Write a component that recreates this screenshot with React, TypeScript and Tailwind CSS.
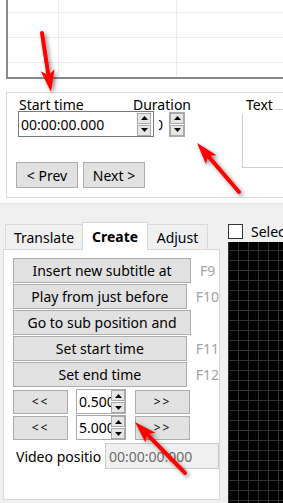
import React from 'react';

const Tri = ({ up }: { up?: boolean }) => (
  <svg width="7" height="4" viewBox="0 0 7 4">
    <polygon points={up ? '0,4 7,4 3.5,0' : '0,0 7,0 3.5,4'} fill="#000" />
  </svg>
);

const Spinner = () => (
  <div className="flex flex-col w-[14px] gap-[1px]">
    <div className="h-[11px] bg-[#e6e6e6] border border-[#a9a9a9] flex items-center justify-center">
      <Tri up />
    </div>
    <div className="h-[11px] bg-[#e6e6e6] border border-[#a9a9a9] flex items-center justify-center">
      <Tri />
    </div>
  </div>
);

const Arrow = ({ x1, y1, x2, y2 }: { x1: number; y1: number; x2: number; y2: number }) => {
  const dx = x2 - x1;
  const dy = y2 - y1;
  const len = Math.sqrt(dx * dx + dy * dy);
  const ux = dx / len;
  const uy = dy / len;
  const head = 22;
  const half = 7;
  const bx = x2 - ux * head;
  const by = y2 - uy * head;
  const pts = `${x2},${y2} ${bx - uy * half},${by + ux * half} ${bx + ux * 5},${by + uy * 5} ${bx + uy * half},${by - ux * half}`;
  return (
    <g filter="url(#shadow)">
      <line x1={x1} y1={y1} x2={bx + ux * 6} y2={by + uy * 6} stroke="#ff0000" strokeWidth="4" strokeLinecap="round" />
      <polygon points={pts} fill="#ff0000" />
    </g>
  );
};

const Btn = ({ children, className }: { children: React.ReactNode; className?: string }) => (
  <div className={`bg-[#e1e1e1] border border-[#adadad] flex items-center justify-center whitespace-nowrap ${className ?? ''}`}>
    {children}
  </div>
);

const shortcuts = [
  { label: 'Insert new subtitle at', key: 'F9' },
  { label: 'Play from just before', key: 'F10' },
  { label: 'Go to sub position and', key: '' },
  { label: 'Set start time', key: 'F11' },
  { label: 'Set end time', key: 'F12' },
];

export default function App() {
  return (
    <div className="w-[283px] h-[503px] overflow-hidden relative bg-white flex flex-col font-['Noto_Sans',sans-serif] text-[14px] text-black leading-[19px]">
      {/* subtitle list */}
      <div className="ml-[6px] h-[79px] shrink-0 border-l-2 border-b-2 border-[#868b90] flex flex-col overflow-hidden">
        {[13, 25, 25, 14].map((h, i) => (
          <div key={i} className={`flex ${i < 3 ? 'border-b border-[#ececec]' : ''}`} style={{ height: h }}>
            <div className="w-[51px] shrink-0 border-r border-[#ececec]" />
            <div className="w-[118px] shrink-0 border-r border-[#ececec]" />
            <div className="flex-1" />
          </div>
        ))}
      </div>

      {/* edit group */}
      <div className="mt-[13px] ml-[6px] h-[106px] shrink-0 border-l border-t border-b border-[#dcdcdc] flex">
        <div className="w-[235px] shrink-0 pl-[11px] pt-[2px]">
          <div className="h-[16px] overflow-hidden flex whitespace-nowrap">
            <span className="w-[115px] pl-[1px] shrink-0">Start time</span>
            <span>Duration</span>
          </div>
          <div className="h-[26px] flex">
            <div className="w-[136px] h-[26px] border border-[#7a7a7a] flex items-center justify-between pl-[2px] pr-[2px]">
              <span>00:00:00.000</span>
              <Spinner />
            </div>
            <div className="w-[5px]" />
            <div className="w-[10px] h-[26px] overflow-hidden flex items-center justify-end pr-[6px]">
              <span>0</span>
            </div>
            <div className="h-[26px] flex items-center">
              <div className="border border-[#a9a9a9] p-0">
                <Spinner />
              </div>
            </div>
          </div>
          <div className="mt-[25px] ml-[-2px] flex gap-[5px]">
            <Btn className="w-[62px] h-[26px]">&lt; Prev</Btn>
            <Btn className="w-[62px] h-[26px]">Next &gt;</Btn>
          </div>
        </div>
        <div className="flex-1 pt-[2px]">
          <div className="h-[16px] flex items-end">
            <span className="pl-[4px] leading-[19px] mb-[-3px]">Text</span>
            <div className="flex-1 ml-[2px] mb-[1px] border-b border-[#cfcfcf]" />
          </div>
          <div className="mt-[3px] h-[54px] border-l border-b border-[#cfcfcf]" />
        </div>
      </div>
      <div className="h-[5px] shrink-0" />

      {/* bottom area */}
      <div className="flex-1 bg-[#f0f0f0] border-t border-[#e3e3e3] flex">
        <div className="w-[217px] ml-[3px] pt-[18px] flex flex-col">
          <div className="h-[27px] flex items-end pl-[2px]">
            <div className="w-[78px] h-[25px] border border-b-0 border-[#d9d9d9] bg-[#f0f0f0] flex items-center justify-center">Translate</div>
            <div className="w-[66px] h-[28px] ml-[-1px] mb-[-1px] relative z-10 border border-b-0 border-[#d9d9d9] bg-white flex items-center justify-center font-bold">Create</div>
            <div className="w-[61px] h-[25px] ml-[-1px] border border-b-0 border-[#d9d9d9] bg-[#f0f0f0] flex items-center justify-center">Adjust</div>
          </div>
          <div className="h-[251px] border border-[#d9d9d9] bg-white pt-[8px] pl-[9px] overflow-hidden">
            <div className="flex flex-col gap-[1px]">
              {shortcuts.map((s) => (
                <div key={s.label} className="flex items-center">
                  <Btn className="w-[178px] h-[25px]">{s.label}</Btn>
                  <span className="ml-[9px] text-[#a3a3a3] whitespace-nowrap">{s.key}</span>
                </div>
              ))}
            </div>
            {['0.500', '5.000'].map((v, i) => (
              <div key={v} className={`h-[25px] flex items-center ${i === 0 ? 'mt-[2px]' : 'mt-[1px]'}`}>
                <Btn className="w-[55px] h-[24px] text-[12px] tracking-[2px]">&lt;&lt;</Btn>
                <div className="w-[50px] h-[25px] ml-[8px] border border-[#a9a9a9] bg-white flex items-center">
                  <div className="w-[34px] overflow-hidden pl-[2px]">
                    <span>{v}</span>
                  </div>
                  <Spinner />
                </div>
                <Btn className="w-[55px] h-[24px] ml-[9px] text-[12px] tracking-[2px]">&gt;&gt;</Btn>
              </div>
            ))}
            <div className="mt-[3px] h-[26px] flex items-center">
              <div className="w-[88px] shrink-0 pl-[3px] overflow-hidden whitespace-nowrap">Video position</div>
              <div className="w-[114px] h-[26px] ml-[4px] shrink-0 border border-[#cccccc] bg-[#f0f0f0] text-[#6d6d6d] flex items-center pl-[3px]">
                00:00:00.000
              </div>
            </div>
          </div>
        </div>
        <div className="flex-1 ml-[8px] pt-[20px] flex flex-col min-w-0">
          <div className="h-[15px] flex items-center whitespace-nowrap overflow-hidden">
            <div className="w-[15px] h-[15px] shrink-0 border border-[#333333] bg-white" />
            <span className="ml-[8px]">Select current subtitle while playing</span>
          </div>
          <div className="mt-[3px] flex-1 bg-black bg-[linear-gradient(to_right,#303030_1px,transparent_1px),linear-gradient(to_bottom,#303030_1px,transparent_1px)] bg-[size:10px_10px] bg-[position:0px_8px]" />
        </div>
      </div>

      {/* annotation arrows */}
      <svg className="absolute inset-0 pointer-events-none" width="283" height="503">
        <defs>
          <filter id="shadow" x="-50%" y="-50%" width="200%" height="200%">
            <feDropShadow dx="2" dy="2" stdDeviation="2" floodColor="#000" floodOpacity="0.45" />
          </filter>
        </defs>
        <Arrow x1={42} y1={33} x2={51} y2={92} />
        <Arrow x1={239} y1={192} x2={197} y2={143} />
        <Arrow x1={185} y1={473} x2={135} y2={422} />
      </svg>
    </div>
  );
}
